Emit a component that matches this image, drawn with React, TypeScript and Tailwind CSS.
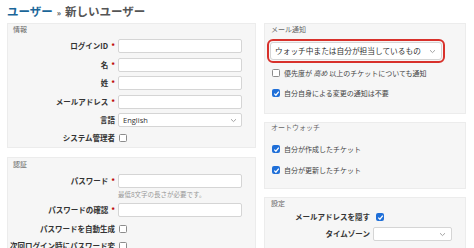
import React from 'react';

function Chevron() {
  return (
    <svg width="7" height="5" viewBox="0 0 7 5" className="shrink-0">
      <path d="M1 1.2 L3.5 3.6 L6 1.2" fill="none" stroke="#9a9a9a" strokeWidth="0.9" />
    </svg>
  );
}

function Checkbox({ checked = false }: { checked?: boolean }) {
  if (checked) {
    return (
      <span className="w-[8px] h-[8px] shrink-0 rounded-[2px] bg-[#1f6fd8] flex items-center justify-center">
        <svg width="7" height="7" viewBox="0 0 7 7">
          <path d="M1.3 3.6 L2.9 5.2 L5.8 1.7" fill="none" stroke="#fff" strokeWidth="1.3" />
        </svg>
      </span>
    );
  }
  return <span className="w-[8px] h-[8px] shrink-0 rounded-[1.5px] border border-[#8c8c8c] bg-white" />;
}

function Legend({ children }: { children: React.ReactNode }) {
  return <div className="text-[7px] leading-[9px] text-[#666]">{children}</div>;
}

function Label({ text, required = false, width }: { text: string; required?: boolean; width: string }) {
  return (
    <div className={`${width} shrink-0 text-right text-[7.5px] font-bold text-[#333] whitespace-nowrap leading-[10px]`}>
      {text}
      {required && <span className="text-[#bb0000] ml-[3px]">*</span>}
    </div>
  );
}

function TextInput() {
  return <div className="w-[124px] h-[14px] bg-white border border-[#d5d5d5] rounded-[2px]" />;
}

function Row({ label, required, children }: { label: string; required?: boolean; children: React.ReactNode }) {
  return (
    <div className="flex items-center gap-[3px]">
      <Label text={label} required={required} width="w-[107px]" />
      {children}
    </div>
  );
}

export default function App() {
  return (
    <div className="w-[474px] h-[248px] overflow-hidden bg-white font-['Noto_Sans_CJK_JP','Noto_Sans',sans-serif]">
      <h2 className="pl-[7px] pt-[4px] h-[23px] text-[11.5px] leading-[14px] font-bold text-[#555]">
        <span className="text-[#1a6699]">ユーザー</span>
        <span className="text-[8px] mx-[4px]">»</span>
        新しいユーザー
      </h2>

      <div className="flex gap-[8px] px-[7px]">
        {/* left column */}
        <div className="w-[249px] flex flex-col gap-[9px]">
          <div className="bg-[#f6f6f6] border border-[#ececec] pt-[1px] pb-[4px]">
            <div className="pl-[5px]">
              <Legend>情報</Legend>
            </div>
            <div className="mt-[5px] flex flex-col gap-[4.5px]">
              <Row label="ログインID" required><TextInput /></Row>
              <Row label="名" required><TextInput /></Row>
              <Row label="姓" required><TextInput /></Row>
              <Row label="メールアドレス" required><TextInput /></Row>
              <Row label="言語">
                <div className="w-[124px] h-[14px] bg-white border border-[#d5d5d5] rounded-[2px] flex items-center justify-between pl-[4px] pr-[4px]">
                  <span className="text-[7.5px] leading-[10px] text-[#333] font-['Open_Sans',sans-serif]">English</span>
                  <Chevron />
                </div>
              </Row>
            </div>
            <div className="mt-[6px]">
              <Row label="システム管理者"><span className="ml-[1px] flex"><Checkbox /></span></Row>
            </div>
          </div>

          <div className="bg-[#f6f6f6] border border-[#ececec] pt-[2px] pb-[6px]">
            <div className="pl-[5px]">
              <Legend>認証</Legend>
            </div>
            <div className="mt-[5px]">
              <Row label="パスワード" required><TextInput /></Row>
            </div>
            <div className="pl-[110px] mt-[2px] text-[6.5px] leading-[9px] text-[#999]">最低8文字の長さが必要です。</div>
            <div className="mt-[4px]">
              <Row label="パスワードの確認" required><TextInput /></Row>
            </div>
            <div className="mt-[7px]">
              <Row label="パスワードを自動生成"><span className="ml-[1px] flex"><Checkbox /></span></Row>
            </div>
            <div className="mt-[7px]">
              <Row label="次回ログイン時にパスワード変"><span className="ml-[1px] flex"><Checkbox /></span></Row>
            </div>
          </div>
        </div>

        {/* right column */}
        <div className="w-[202px] flex flex-col gap-[8px]">
          <div className="bg-[#f6f6f6] border border-[#ececec] pt-[1px] pb-[15px]">
            <div className="pl-[6px]">
              <Legend>メール通知</Legend>
            </div>
            <div className="ml-[2px] mt-[5px] w-[178px] border-2 border-[#d8312b] rounded-[6px] p-[1px]">
              <div className="h-[18px] bg-white border border-[#d5d5d5] rounded-[3px] flex items-center justify-between pl-[4px] pr-[5px]">
                <span className="text-[7.7px] leading-[10px] text-[#333] whitespace-nowrap">ウォッチ中または自分が担当しているもの</span>
                <Chevron />
              </div>
            </div>
            <div className="mt-[5px] pl-[7px] flex items-center gap-[4px] h-[10px]">
              <Checkbox />
              <span className="text-[7px] leading-[10px] text-[#444]">
                優先度が <i>高め</i> 以上のチケットについても通知
              </span>
            </div>
            <div className="mt-[10px] pl-[7px] flex items-center gap-[4px] h-[10px]">
              <Checkbox checked />
              <span className="text-[7px] leading-[10px] text-[#444]">自分自身による変更の通知は不要</span>
            </div>
          </div>

          <div className="bg-[#f6f6f6] border border-[#ececec] pt-[0px] pb-[13px]">
            <div className="pl-[6px]">
              <Legend>オートウォッチ</Legend>
            </div>
            <div className="mt-[12px] pl-[7px] flex items-center gap-[4px] h-[10px]">
              <Checkbox checked />
              <span className="text-[7px] leading-[10px] text-[#444]">自分が作成したチケット</span>
            </div>
            <div className="mt-[11px] pl-[7px] flex items-center gap-[4px] h-[10px]">
              <Checkbox checked />
              <span className="text-[7px] leading-[10px] text-[#444]">自分が更新したチケット</span>
            </div>
          </div>

          <div className="bg-[#f6f6f6] border border-[#ececec] pt-[1px] pb-[10px]">
            <div className="pl-[6px]">
              <Legend>設定</Legend>
            </div>
            <div className="mt-[4px] flex items-center gap-[6px] h-[10px]">
              <Label text="メールアドレスを隠す" width="w-[105px]" />
              <Checkbox checked />
            </div>
            <div className="mt-[5px] flex items-center gap-[3px]">
              <Label text="タイムゾーン" width="w-[105px]" />
              <div className="w-[79px] h-[14px] bg-white border border-[#d5d5d5] rounded-[2px] flex items-center justify-end pr-[5px]">
                <Chevron />
              </div>
            </div>
          </div>
        </div>
      </div>
    </div>
  );
}
